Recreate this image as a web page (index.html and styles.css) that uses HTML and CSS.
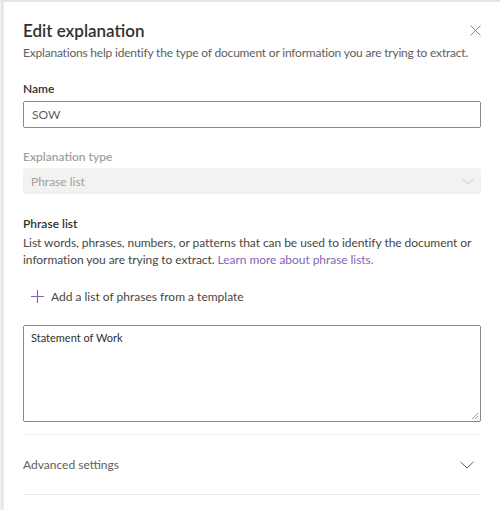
FILE: index.html
```html
<!DOCTYPE html>
<html lang="en">
<head>
<meta charset="utf-8">
<title>Edit explanation</title>
<link rel="stylesheet" href="styles.css">
</head>
<body>
<div class="frame">
  <div class="panel">
    <div class="header">
      <h1 class="title">Edit explanation</h1>
      <button class="close" aria-label="Close">
        <svg width="11" height="11" viewBox="0 0 11 11"><path d="M0.5 0.5 L10.5 10.5 M10.5 0.5 L0.5 10.5" stroke="#8a8886" stroke-width="1" fill="none"/></svg>
      </button>
    </div>
    <p class="subtitle">Explanations help identify the type of document or information you are trying to extract.</p>

    <div class="field field-name">
      <label class="label">Name</label>
      <div class="input">SOW</div>
    </div>

    <div class="field field-type">
      <label class="label label-disabled">Explanation type</label>
      <div class="dropdown">
        <span>Phrase list</span>
        <svg width="12" height="7" viewBox="0 0 12 7"><path d="M0.5 0.8 L6 6.2 L11.5 0.8" stroke="#c8c6c4" stroke-width="1" fill="none"/></svg>
      </div>
    </div>

    <div class="field field-phrase">
      <label class="label">Phrase list</label>
      <p class="desc">List words, phrases, numbers, or patterns that can be used to identify the document or information you are trying to extract. <a class="link" href="#">Learn more about phrase lists.</a></p>
    </div>

    <div class="add-row">
      <svg width="13" height="13" viewBox="0 0 13 13"><path d="M6.5 0 V13 M0 6.5 H13" stroke="#8764b8" stroke-width="1.1" fill="none"/></svg>
      <span>Add a list of phrases from a template</span>
    </div>

    <div class="textarea">
      <span>Statement of Work</span>
      <svg class="grip" width="10" height="10" viewBox="0 0 10 10"><path d="M9 3 L3 9 M9 6 L6 9" stroke="#a19f9d" stroke-width="1" fill="none"/></svg>
    </div>

    <div class="sep-dotted"></div>

    <div class="advanced">
      <span>Advanced settings</span>
      <svg width="14" height="8" viewBox="0 0 14 8"><path d="M0.5 0.8 L7 7 L13.5 0.8" stroke="#605e5c" stroke-width="1" fill="none"/></svg>
    </div>
    <div class="sep-solid"></div>
  </div>
</div>
</body>
</html>
```
FILE: styles.css
```css
* { box-sizing: border-box; }
html, body { margin: 0; padding: 0; background: #fff; }
body {
  font-family: "Segoe UI", "Lato", "Open Sans", sans-serif;
  color: #323130;
  width: 500px;
  height: 510px;
  overflow: hidden;
}
.frame {
  border-top: 2px solid #e6e5e4;
  border-left: 4px solid #efeeed;
  height: 510px;
  position: relative;
}
.frame::before {
  content: "";
  position: absolute;
  left: -2px;
  top: 0;
  bottom: 0;
  border-left: 1px dotted #d6d4d2;
}
.panel {
  padding: 17px 19px 0 19px;
}
.header {
  display: flex;
  justify-content: space-between;
  align-items: flex-start;
}
.title {
  margin: 0;
  font-size: 17px;
  font-weight: 600;
  line-height: 24px;
}
.close {
  border: 0;
  background: none;
  padding: 0;
  margin: 6px 0 0 0;
  width: 11px;
  height: 11px;
  display: block;
}
.close svg { display: block; }
.subtitle {
  margin: 1px 0 0;
  font-size: 12px;
  line-height: 18px;
  color: #605e5c;
  letter-spacing: -0.2px;
  white-space: nowrap;
}
.field { display: flex; flex-direction: column; }
.label {
  font-size: 12px;
  font-weight: 600;
  line-height: 18px;
}
.label-disabled { color: #a19f9d; }
.field-name { margin-top: 18px; }
.field-name .label { margin-bottom: 3px; }
.input {
  height: 27px;
  border: 1px solid #8a8886;
  border-radius: 2px;
  padding: 0 8px;
  font-size: 12px;
  line-height: 25px;
  color: #605e5c;
}
.field-type { margin-top: 20px; }
.field-type .label { margin-bottom: 2px; }
.dropdown {
  height: 26px;
  background: #f3f2f1;
  border-radius: 2px;
  padding: 0 7px 0 8px;
  display: flex;
  align-items: center;
  justify-content: space-between;
  font-size: 12px;
  color: #a19f9d;
}
.dropdown svg { display: block; }
.field-phrase { margin-top: 21px; }
.desc {
  margin: 1px 0 0;
  font-size: 12px;
  line-height: 17px;
  color: #484644;
  letter-spacing: -0.05px;
}
.link { color: #8764b8; text-decoration: none; }
.add-row {
  margin-top: 18px;
  padding-left: 8px;
  display: flex;
  align-items: center;
  gap: 7px;
  font-size: 12px;
  color: #484644;
  height: 20px;
}
.add-row svg { display: block; }
.textarea {
  margin-top: 19px;
  height: 97px;
  border: 1px solid #8a8886;
  border-radius: 2px;
  padding: 4px 7px;
  font-size: 11px;
  line-height: 16px;
  color: #323130;
  position: relative;
}
.grip { position: absolute; right: 1px; bottom: 1px; }
.sep-dotted {
  margin-top: 12px;
  border-top: 1px dotted #e1dfdd;
}
.advanced {
  height: 59px;
  display: flex;
  align-items: center;
  justify-content: space-between;
  padding-right: 7px;
  font-size: 12px;
  color: #605e5c;
}
.advanced svg { display: block; }
.sep-solid { border-top: 1px solid #edebe9; }
```
